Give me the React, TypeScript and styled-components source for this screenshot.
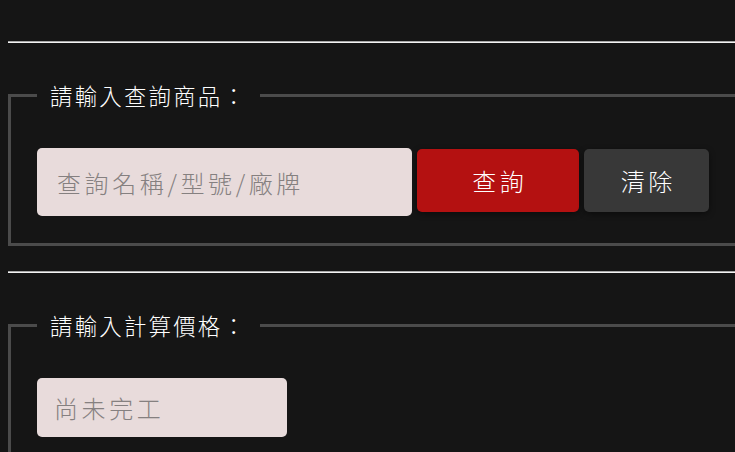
import React from 'react'
import styled, { createGlobalStyle } from 'styled-components'

const GlobalStyle = createGlobalStyle`
  html, body {
    margin: 0;
    padding: 0;
    background: #151515;
    overflow: hidden;
  }
  body {
    padding: 8px;
    font-family: "Noto Sans CJK TC", "Noto Sans", sans-serif;
    font-weight: 300;
    color: #fff;
  }
`

const Page = styled.div`
  width: 1000px;
  padding-top: 33px;
`

const Divider = styled.hr`
  margin: 0;
  height: 0;
  border: none;
  border-top: 1px solid #a8a8a8;
  border-bottom: 1px solid #f2f2f2;
`

const Section = styled.section`
  margin-bottom: 25px;
`

const Fieldset = styled.fieldset`
  margin: 37px 0 0;
  padding: 37px 26px 27px;
  border: 3px solid #4b4b4b;
  min-width: 0;
`

const Legend = styled.legend`
  padding: 0 13px;
  font-size: 22.4px;
  font-weight: 300;
  line-height: 31px;
  letter-spacing: 0.1em;
  color: #fff;
`

const Row = styled.div`
  display: flex;
  align-items: flex-start;
  gap: 5px;
`

const Field = styled.input<{ $width: number; $height: number; $pad: number }>`
  box-sizing: border-box;
  width: ${(p) => p.$width}px;
  height: ${(p) => p.$height}px;
  padding: 0 ${(p) => p.$pad}px;
  border: none;
  border-radius: 5px;
  background: #e8dbdb;
  font-family: "Noto Sans CJK TC", "Noto Sans", sans-serif;
  font-size: 24px;
  font-weight: 300;
  letter-spacing: 0.15em;
  color: #333;
  outline: none;

  &::placeholder {
    color: #858080;
  }
`

const Button = styled.button<{ $variant: 'primary' | 'plain'; $width: number }>`
  box-sizing: border-box;
  width: ${(p) => p.$width}px;
  height: 63px;
  margin-top: 1px;
  padding: 0;
  border: none;
  border-radius: 5px;
  background: ${(p) => (p.$variant === 'primary' ? '#b41111' : '#383838')};
  box-shadow: 0 2px 6px rgba(0, 0, 0, 0.45);
  color: #fff;
  font-family: "Noto Sans CJK TC", "Noto Sans", sans-serif;
  font-size: 24px;
  font-weight: 300;
  letter-spacing: 0.15em;
  text-indent: 0.15em;
  cursor: pointer;
`

export default function App() {
  return (
    <>
      <GlobalStyle />
      <Page>
        <Section>
          <Divider />
          <Fieldset>
            <Legend>請輸入查詢商品：</Legend>
            <Row>
              <Field $width={375} $height={68} $pad={20} placeholder="查詢名稱/型號/廠牌" />
              <Button $variant="primary" $width={162}>查詢</Button>
              <Button $variant="plain" $width={125}>清除</Button>
            </Row>
          </Fieldset>
        </Section>
        <Section>
          <Divider />
          <Fieldset>
            <Legend>請輸入計算價格：</Legend>
            <Row>
              <Field $width={250} $height={59} $pad={17} placeholder="尚未完工" />
            </Row>
          </Fieldset>
        </Section>
      </Page>
    </>
  )
}
